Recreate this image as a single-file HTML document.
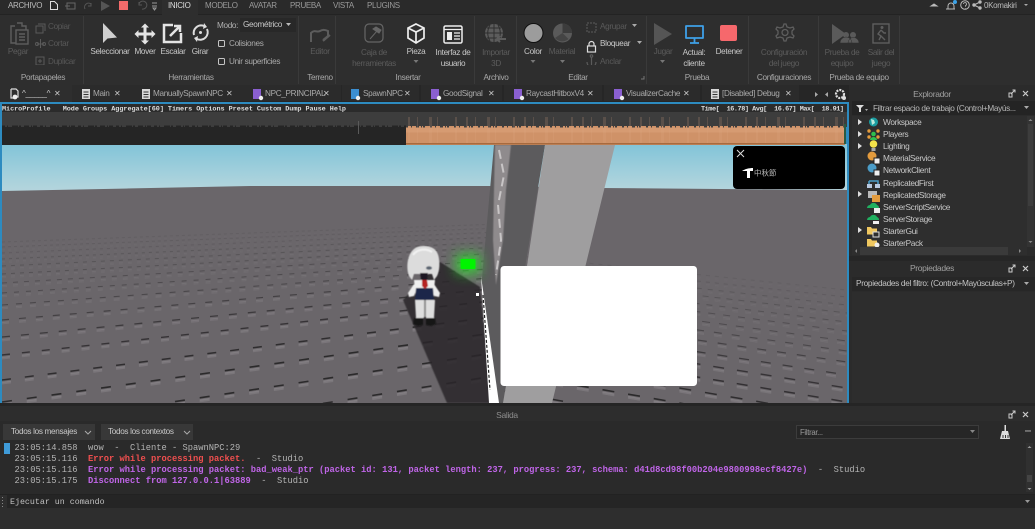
<!DOCTYPE html>
<html><head><meta charset="utf-8"><style>
html,body{margin:0;padding:0;background:#2e2e2e}
#a{position:relative;width:1035px;height:529px;overflow:hidden;background:#2e2e2e;font-family:"Liberation Sans","Noto Sans CJK SC",sans-serif;font-size:8.2px;color:#c8c8c8;filter:blur(.25px)}
#a div,#a span.t,#a svg{position:absolute}
.t{position:absolute;white-space:nowrap;line-height:10px;letter-spacing:-.33px}
.c{transform:translateX(-50%);text-align:center}
.d{color:#5c5c5c}
.g{color:#a9a9a9}
.s{position:absolute;width:1px;background:#3a3a3a;top:16px;height:68px}
.x{position:absolute;color:#c8c8c8;font-size:8px;line-height:10px}
.m{font-family:"Liberation Mono",monospace;font-size:8.75px;line-height:11px;white-space:pre;position:absolute;left:14.5px;color:#b4b4b4}
.m b{font-weight:700}
</style></head><body><div id="a">

<!-- top menu -->
<div style="left:0;top:0;width:1035px;height:14px;background:#2a2a2a"></div>
<div style="left:0;top:14px;width:1035px;height:1px;background:#232323"></div>
<div style="left:162px;top:0;width:36px;height:15px;background:#2e2e2e"></div>
<span class="t" style="left:8px;top:1px;color:#bbb;font-size:8px">ARCHIVO</span>
<span class="t" style="left:168px;top:1px;color:#ddd;font-size:8px">INICIO</span>
<span class="t" style="left:205px;top:1px;color:#9a9a9a;font-size:8px">MODELO</span>
<span class="t" style="left:249px;top:1px;color:#9a9a9a;font-size:8px">AVATAR</span>
<span class="t" style="left:290px;top:1px;color:#9a9a9a;font-size:8px">PRUEBA</span>
<span class="t" style="left:333px;top:1px;color:#9a9a9a;font-size:8px">VISTA</span>
<span class="t" style="left:367px;top:1px;color:#9a9a9a;font-size:8px">PLUGINS</span>
<svg style="left:0;top:0" width="170" height="14" fill="none" stroke-width="1">
<path d="M50.5 1.5h4l3 3v5h-7z" stroke="#ddd"/>
<path d="M67 3h8v6h-8zM65 6h5" stroke="#666"/>
<path d="M85 9a4 4 0 0 1 6-5m0-1v3h-3" stroke="#555"/>
<path d="M101 1l9 5-9 5z" fill="#555" stroke="none"/>
<rect x="119" y="1" width="9" height="9" fill="#f46a6a" stroke="none"/>
<path d="M142 9a4 4 0 1 0-3-5m0-2v3h3" stroke="#555"/>
<path d="M152 3h5M152 6h5M153 8l1.500 2 1.500-2z" stroke="#999"/>
</svg>
<svg style="left:915px;top:0" width="120" height="14" fill="none" stroke="#bbb">
<path d="M16 6l3-2 3 2z" fill="#bbb"/>
<path d="M33 9v-3a3 3 0 0 1 6 0v3h1h-9" />
<circle cx="40" cy="2" r="2" fill="#3ca3e8" stroke="none"/>
<circle cx="50" cy="5" r="4.300"/><path d="M48.500 4a1.500 1.500 0 1 1 2 1.500v1.200M50.500 8v.4" stroke-width=".8"/>
<circle cx="59" cy="5" r="1.200" fill="#bbb"/><circle cx="65" cy="2" r="1.200" fill="#bbb"/><circle cx="65" cy="8" r="1.200" fill="#bbb"/><path d="M59 5l6-3M59 5l6 3"/>
<path d="M109 4l2 2 2-2z" fill="#aaa" stroke="none"/>
</svg>
<span class="t" style="left:984px;top:1px;color:#bbb;font-size:8px">0Komakiri</span>

<!-- ribbon group separators -->
<i class="s" style="left:83px"></i><i class="s" style="left:298px"></i><i class="s" style="left:335px"></i><i class="s" style="left:474px"></i><i class="s" style="left:516px"></i><i class="s" style="left:646px"></i><i class="s" style="left:748px"></i><i class="s" style="left:818px"></i><i class="s" style="left:899px"></i>

<!-- ribbon icons -->
<svg style="left:0;top:15px" width="900" height="50" fill="none">
<!-- pegar -->
<g stroke="#5e5e5e" stroke-width="1.400"><path d="M15 11h-4v17h5M17 8h5v3h4v4"/><rect x="16" y="15" width="12" height="14"/><path d="M19 19h6M19 22h6M19 25h6"/></g>
<!-- copiar etc -->
<g stroke="#5a5a5a"><rect x="36" y="11" width="7" height="7"/><path d="M38 9h7v7"/><circle cx="37" cy="29" r="1.500"/><circle cx="44" cy="29" r="1.500"/><path d="M40.500 24v9M37 29h7"/><rect x="36" y="42" width="8" height="8"/><path d="M38 46h4M40 44v4"/></g>
<!-- select -->
<path d="M103 8v20l4.500-4.500 9.500-1z" fill="#cfcfcf"/>
<!-- move -->
<path d="M145 9l4 4h-2.500v5h5v-2.500l4 4-4 4V21h-5v5h2.500l-4 4-4-4h2.500v-5h-5v2.500l-4-4 4-4V18h5v-5H141z" fill="#e4e4e4" transform="translate(0 -.5)"/>
<!-- scale -->
<path d="M173 10h-9v17h17v-9M170 21l10-10m-6 0h6v6" stroke="#e4e4e4" stroke-width="2.500"/>
<!-- rotate -->
<path d="M194 20a7.500 7.500 0 0 1 10-9M207 14a7.500 7.500 0 0 1-10 10" stroke="#ddd" stroke-width="2"/><path d="M204 8l3 4-4 2zM197 27l-3-4 4-2z" fill="#ddd"/><circle cx="200.500" cy="17.500" r="1.500" fill="#ddd"/>
<!-- terreno -->
<path d="M311 27v-9c4-4 6 0 9-2s6-1 8 0v5l-5 4" stroke="#5c5c5c" stroke-width="2"/><path d="M323 26l7-6" stroke="#5c5c5c" stroke-width="2"/>
<!-- toolbox -->
<rect x="365" y="9" width="18" height="18" rx="4" stroke="#666" stroke-width="1.200"/><path d="M370 24l7-8m-4-2l6 4 2-3-5-3z" fill="#666" stroke="#666"/>
<!-- pieza -->
<path d="M416 9l8 4v10l-8 5-8-5V13zM408 13l8 4 8-4M416 17v11" stroke="#eee" stroke-width="1.700"/>
<!-- UI -->
<rect x="444" y="11" width="18" height="17" rx="1.500" stroke="#eee" stroke-width="1.500"/><rect x="447" y="17" width="5" height="8" fill="#eee"/><path d="M444 14.500h18M454 18h6M454 21h6M454 24h6" stroke="#eee" stroke-width="1.200"/>
<!-- import -->
<circle cx="494" cy="18" r="9" fill="#5c5c5c"/><path d="M485 18h18M494 9v18M487 13h14M487 23h14M490 10c-3 5-3 11 0 16M498 10c3 5 3 11 0 16" stroke="#2e2e2e"/><path d="M506 24h-9m3-3l-3 3 3 3" stroke="#5c5c5c" stroke-width="2"/>
<!-- color/material -->
<circle cx="533.500" cy="18" r="9.500" fill="#9c9c9c" stroke="#111" stroke-width="1"/>
<circle cx="562.500" cy="18" r="9.500" fill="#5a5a5a"/><path d="M562.500 18V8.500a9.500 9.500 0 0 1 9.500 9.500z" fill="#3c3c3c"/><path d="M555 23l7.500-5 6 6a9.500 9.500 0 0 1-13.500-1z" fill="#444"/>
<!-- agrupar lock anchor -->
<rect x="587" y="8" width="9" height="9" stroke="#5c5c5c" stroke-dasharray="2 1"/>
<g stroke="#ddd" stroke-width="1.200"><rect x="587.500" y="31" width="8" height="6"/><path d="M589 31v-2a2.500 2.500 0 0 1 5 0v2"/></g>
<g stroke="#5c5c5c" stroke-width="1.200"><circle cx="591.500" cy="41" r="1.200"/><path d="M591.500 42.500V51M587 47c0 3 2 4.500 4.500 4.500s4.500-1.500 4.500-4.500"/></g>
<!-- play -->
<path d="M654 8v22l18-11z" fill="#555"/>
<!-- actual cliente -->
<path d="M686 11h17v12h-17zM694.500 23v5M690 28h9" stroke="#3ea0e8" stroke-width="1.800" stroke-linejoin="round"/>
<!-- detener -->
<rect x="720" y="10" width="17" height="16" rx="2" fill="#f6686c"/>
<!-- config -->
<path d="M784 9l2 0 1 3 3 1 3-1 1 2-2 2v3l2 2-1 2-3-1-3 1-1 3h-2l-1-3-3-1-3 1-1-2 2-2v-3l-2-2 1-2 3 1 3-1z" stroke="#5e5e5e" stroke-width="1.300"/><circle cx="785" cy="17.500" r="3" stroke="#5e5e5e" stroke-width="1.300"/>
<!-- team test -->
<path d="M832 9l14 10-14 10z" fill="#5a5a5a"/><circle cx="846" cy="20" r="3" fill="#5a5a5a"/><circle cx="853" cy="20" r="3" fill="#5a5a5a"/><path d="M840 28a4 4 0 0 1 12 0zM848 28a4 4 0 0 1 11 0z" fill="#5a5a5a" stroke="#2e2e2e" stroke-width=".5"/>
<!-- exit -->
<rect x="873" y="9" width="16" height="19" stroke="#5e5e5e" stroke-width="1.400"/><circle cx="882" cy="12.500" r="1.500" fill="#5e5e5e"/><path d="M881 15l-3 4 3 2-2 4M881 15l3 3 2 0M881 21l4 4" stroke="#5e5e5e" stroke-width="1.400"/>
</svg>
<svg style="left:218px;top:39px" width="10" height="30" fill="none" stroke="#c5c5c5"><rect x=".5" y="1.500" width="6" height="6" rx="1"/><rect x=".5" y="19.500" width="6" height="6" rx="1"/></svg>

<!-- ribbon labels -->
<span class="t" style="left:48px;top:22px;color:#585858">Copiar</span>
<span class="t" style="left:48px;top:39px;color:#585858">Cortar</span>
<span class="t" style="left:48px;top:57px;color:#585858">Duplicar</span>
<span class="t c d" style="left:18px;top:47px">Pegar</span>
<span class="t c" style="left:110px;top:47px">Seleccionar</span>
<span class="t c" style="left:145px;top:47px">Mover</span>
<span class="t c" style="left:173px;top:47px">Escalar</span>
<span class="t c" style="left:200px;top:47px">Girar</span>
<span class="t" style="left:217px;top:21px;color:#b0b0b0">Modo:</span>
<div style="left:240px;top:18px;width:56px;height:14px;background:#282828"></div>
<span class="t" style="left:243px;top:20px;font-size:8.200px">Geométrico</span>
<svg style="left:286px;top:22px" width="6" height="5"><path d="M0 1h5L2.500 4z" fill="#bbb"/></svg>
<span class="t" style="left:229px;top:39px;color:#aaa">Colisiones</span>
<span class="t" style="left:229px;top:57px;color:#aaa">Unir superficies</span>
<span class="t c d" style="left:320px;top:47px">Editor</span>
<span class="t c d" style="left:374px;top:47px;line-height:11px">Caja de<br>herramientas</span>
<span class="t c" style="left:416px;top:47px">Pieza</span>
<span class="t c" style="left:453px;top:47px;line-height:11px">Interfaz de<br>usuario</span>
<span class="t c d" style="left:496px;top:47px;line-height:11px">Importar<br>3D</span>
<span class="t c" style="left:533px;top:47px">Color</span>
<span class="t c d" style="left:562px;top:47px">Material</span>
<span class="t" style="left:600px;top:22px;color:#5a5a5a">Agrupar</span>
<span class="t" style="left:600px;top:39px;color:#ccc">Bloquear</span>
<span class="t" style="left:600px;top:57px;color:#5a5a5a">Anclar</span>
<span class="t c d" style="left:663px;top:47px">Jugar</span>
<span class="t c" style="left:694px;top:47px;line-height:11px">Actual:<br>cliente</span>
<span class="t c" style="left:729px;top:47px">Detener</span>
<span class="t c d" style="left:784px;top:47px;line-height:11px">Configuración<br>del juego</span>
<span class="t c d" style="left:842px;top:47px;line-height:11px">Prueba de<br>equipo</span>
<span class="t c d" style="left:881px;top:47px;line-height:11px">Salir del<br>juego</span>
<svg style="left:0;top:60px" width="680" height="8"><path d="M413.500 0h5l-2.500 3zM530.500 0h5L533 3zM560 0h5l-2.500 3zM660 0h5l-2.500 3z" fill="#777"/></svg>
<svg style="left:0;top:15px" width="680" height="40"><path d="M632 9h5l-2.500 3zM637 26h5l-2.500 3z" fill="#aaa"/></svg>

<span class="t c g" style="left:43px;top:73px">Portapapeles</span>
<span class="t c g" style="left:191px;top:73px">Herramientas</span>
<span class="t c g" style="left:320px;top:73px">Terreno</span>
<span class="t c g" style="left:408px;top:73px">Insertar</span>
<span class="t c g" style="left:496px;top:73px">Archivo</span>
<span class="t c g" style="left:578px;top:73px">Editar</span>
<span class="t c g" style="left:697px;top:73px">Prueba</span>
<span class="t c g" style="left:784px;top:73px">Configuraciones</span>
<span class="t c g" style="left:859px;top:73px">Prueba de equipo</span>
<svg style="left:640px;top:75px" width="6" height="6"><path d="M1 4h3V1" fill="none" stroke="#777"/></svg>

<!-- tabs bar -->
<div style="left:0;top:85px;width:850px;height:18px;background:#262626"></div>
<div style="left:0;top:85px;width:72px;height:18px;background:#2e2e2e"></div>
<div style="left:72px;top:85px;width:59px;height:16px;background:#2b2b2b"></div>
<div style="left:131px;top:85px;width:111px;height:16px;background:#2b2b2b"></div>
<div style="left:242px;top:85px;width:99px;height:16px;background:#2b2b2b"></div>
<div style="left:342px;top:85px;width:77px;height:16px;background:#2b2b2b"></div>
<div style="left:421px;top:85px;width:81px;height:16px;background:#2b2b2b"></div>
<div style="left:504px;top:85px;width:98px;height:16px;background:#2b2b2b"></div>
<div style="left:604px;top:85px;width:96px;height:16px;background:#2b2b2b"></div>
<div style="left:702px;top:85px;width:97px;height:16px;background:#2b2b2b"></div>
<svg style="left:0;top:85px" width="850" height="18">
<g fill="#d8d8d8"><rect x="82" y="4" width="8" height="10"/><rect x="142" y="4" width="8" height="10"/><rect x="711" y="4" width="8" height="10"/></g>
<g stroke="#333"><path d="M83.500 7h5M83.500 9.500h5M83.500 12h5M143.500 7h5M143.500 9.500h5M143.500 12h5M712.500 7h5M712.500 9.500h5M712.500 12h5"/></g>
<g fill="#8a5fd0"><rect x="253" y="4" width="8" height="10"/><rect x="431" y="4" width="8" height="10"/><rect x="514" y="4" width="8" height="10"/><rect x="614" y="4" width="8" height="10"/></g>
<rect x="351" y="4" width="8" height="10" fill="#3b8ed0"/>
<g fill="#eee"><circle cx="261" cy="13" r="2.200"/><circle cx="439" cy="13" r="2.200"/><circle cx="522" cy="13" r="2.200"/><circle cx="622" cy="13" r="2.200"/><circle cx="358" cy="13" r="2.200"/></g>
<path d="M11 4h5l2 2v6h-1M11 4v9h3" fill="none" stroke="#ddd" stroke-width="1.200"/><circle cx="15" cy="12" r="2.400" fill="#eee"/>
<path d="M815 7l3 2.500-3 2.500z" fill="#aaa"/><path d="M828 7l-3 2.500 3 2.500z" fill="#aaa"/>
<circle cx="840" cy="9" r="4" fill="none" stroke="#ddd" stroke-width="2.200" stroke-dasharray="2 1"/><circle cx="844" cy="13" r="2" fill="#ddd"/>
</svg>
<span class="t" style="left:22px;top:89px">^_____^</span><span class="x" style="left:54px;top:89px">✕</span>
<span class="t" style="left:93px;top:89px;color:#aaa">Main</span><span class="x" style="left:114px;top:89px">✕</span>
<span class="t" style="left:153px;top:89px;color:#aaa">ManuallySpawnNPC</span><span class="x" style="left:226px;top:89px">✕</span>
<span class="t" style="left:265px;top:89px;color:#aaa">NPC_PRINCIPAL</span><span class="x" style="left:323px;top:89px">✕</span>
<span class="t" style="left:363px;top:89px;color:#aaa">SpawnNPC</span><span class="x" style="left:404px;top:89px">✕</span>
<span class="t" style="left:443px;top:89px;color:#aaa">GoodSignal</span><span class="x" style="left:488px;top:89px">✕</span>
<span class="t" style="left:526px;top:89px;color:#aaa">RaycastHitboxV4</span><span class="x" style="left:587px;top:89px">✕</span>
<span class="t" style="left:626px;top:89px;color:#aaa">VisualizerCache</span><span class="x" style="left:683px;top:89px">✕</span>
<span class="t" style="left:722px;top:89px;color:#aaa">[Disabled] Debug</span><span class="x" style="left:785px;top:89px">✕</span>

<!-- viewport -->
<div style="left:0;top:102px;width:849px;height:303px;background:#2d8bc0"></div>
<svg style="left:2px;top:104px" width="845" height="299" viewBox="2 104 845 299">
<defs>
<linearGradient id="sky" x1="0" y1="0" x2="0" y2="1"><stop offset="0" stop-color="#82c4d8"/><stop offset=".6" stop-color="#a3d0dc"/><stop offset="1" stop-color="#b8d6dd"/></linearGradient>
<filter id="gl" x="-200%" y="-200%" width="500%" height="500%"><feGaussianBlur stdDeviation="6"/></filter>
<filter id="b1"><feGaussianBlur stdDeviation=".6"/></filter>
<filter id="b2"><feGaussianBlur stdDeviation=".4"/></filter>
<g id="L" fill="none">
<path d="M2 455L500 375" stroke-width="1.600" stroke-dasharray="10 15" stroke-opacity=".9"/>
<path d="M2 428L500 352" stroke-width="1.600" stroke-dasharray="10 15" stroke-opacity=".9"/>
<path d="M2 402L500 332" stroke-width="1.600" stroke-dasharray="10 15" stroke-opacity=".9"/>
<path d="M2 380L500 316" stroke-width="1.500" stroke-dasharray="9 14" stroke-opacity=".85"/>
<path d="M2 355L500 300" stroke-width="1.400" stroke-dasharray="8 12" stroke-opacity=".75"/>
<path d="M2 337L500 288" stroke-width="1.300" stroke-dasharray="8 11" stroke-opacity=".65"/>
<path d="M2 320L500 277" stroke-width="1.200" stroke-dasharray="7 10" stroke-opacity=".55"/>
<path d="M2 305L500 268" stroke-width="1.100" stroke-dasharray="6 8" stroke-opacity=".45"/>
<path d="M2 293L500 260" stroke-width="1" stroke-dasharray="5 7" stroke-opacity=".4"/>
<path d="M2 283L500 253" stroke-width="1" stroke-dasharray="5 6" stroke-opacity=".35"/>
<path d="M2 274L500 247" stroke-width="1" stroke-dasharray="4 5" stroke-opacity=".3"/>
<path d="M2 266L500 242" stroke-width="1" stroke-dasharray="4 5" stroke-opacity=".25"/>
<path d="M2 259L500 237" stroke-width="1" stroke-dasharray="3 4" stroke-opacity=".2"/>
<path d="M2 253L500 232" stroke-width="1" stroke-dasharray="3 4" stroke-opacity=".15"/>
<path d="M2 247L500 228" stroke-width="1" stroke-dasharray="3 3" stroke-opacity=".12"/>
<path d="M2 242L500 224" stroke-width="1" stroke-dasharray="3 3" stroke-opacity=".1"/>
<path d="M500 390L847 452" stroke-width="1.600" stroke-dasharray="12 14" stroke-opacity=".9"/>
<path d="M500 372L847 432" stroke-width="1.600" stroke-dasharray="12 14" stroke-opacity=".9"/>
<path d="M500 357L847 417" stroke-width="1.500" stroke-dasharray="12 14" stroke-opacity=".85"/>
<path d="M500 344L847 402" stroke-width="1.500" stroke-dasharray="11 13" stroke-opacity=".8"/>
<path d="M500 332L847 388" stroke-width="1.400" stroke-dasharray="11 13" stroke-opacity=".75"/>
<path d="M500 321L847 375" stroke-width="1.300" stroke-dasharray="10 12" stroke-opacity=".65"/>
<path d="M500 311L847 362" stroke-width="1.200" stroke-dasharray="9 11" stroke-opacity=".55"/>
<path d="M500 302L847 351" stroke-width="1.100" stroke-dasharray="8 10" stroke-opacity=".45"/>
<path d="M500 294L847 341" stroke-width="1" stroke-dasharray="8 9" stroke-opacity=".4"/>
<path d="M500 286L847 331" stroke-width="1" stroke-dasharray="7 8" stroke-opacity=".35"/>
<path d="M500 279L847 322" stroke-width="1" stroke-dasharray="6 7" stroke-opacity=".3"/>
<path d="M500 272L847 313" stroke-width="1" stroke-dasharray="6 6" stroke-opacity=".25"/>
<path d="M500 266L847 305" stroke-width="1" stroke-dasharray="5 6" stroke-opacity=".2"/>
<path d="M500 260L847 297" stroke-width="1" stroke-dasharray="4 5" stroke-opacity=".15"/>
<path d="M500 254L847 290" stroke-width="1" stroke-dasharray="4 5" stroke-opacity=".1"/>
</g>
</defs>
<rect x="2" y="144" width="845" height="50" fill="url(#sky)"/>
<path d="M2 191L250 186L500 186L600 188L847 190V403H2z" fill="#6a666a"/>
<!-- stud rows -->
<use href="#L" y="2.500" stroke="#858185"/>
<use href="#L" y="3.800" stroke="#7c787c"/>
<use href="#L" y="0" stroke="#252325"/>
<!-- shadow -->
<path d="M440 262L480 287L491 403L447 403L403 300z" fill="#2a282a" opacity=".86" filter="url(#b1)"/>
<!-- walls -->
<path d="M494 145H545L503 403H490L482 278z" fill="#5c5b5d"/>
<path d="M545 145H615L552 403H503L527 266z" fill="#9f9e9f"/>
<path d="M495 145H511L506 190L503 240L496 285L493 240L494 190z" fill="#8f8b8d" filter="url(#b1)"/>
<path d="M499 150L504 175L498 205L501 240L496 275" stroke="#c8c5c6" stroke-width="2" fill="none" stroke-dasharray="9 5"/>
<!-- white spike -->
<path d="M481 276L499 403L489 403z" fill="#fff"/>
<path d="M483 295L490 390" stroke="#222" stroke-width="1.200" stroke-dasharray="3 2" fill="none"/>
<rect x="476" y="293" width="3" height="3" fill="#fff"/>
<!-- glow -->
<rect x="456" y="254" width="24" height="20" fill="#26e826" filter="url(#gl)" opacity=".75"/>
<rect x="460.500" y="259" width="15" height="10" fill="#00f500" rx="1"/>
<!-- character -->
<g filter="url(#b2)">
<path d="M414 284l-6 9 1 4 5-1 3-7zM434 284l6 9-1 4-5-1-3-7z" fill="#ececec"/>
<path d="M414 280h21l-1 10h-19z" fill="#efefef"/>
<path d="M416 288h17l1 12h-19z" fill="#1e2748"/>
<path d="M415 300h9v18h-8zM426 300h9l-1 18h-8z" fill="#dedede"/>
<path d="M424 300h2v17h-2z" fill="#8d8d8d"/>
<path d="M414 318h9v7l-5 1-5-2zM426 318h9l1 6-5 2-5-1z" fill="#161616"/>
<path d="M423 246c10 0 15 4 16 13c1 7 0 13-2 17l-3 4l-2-6h-18l-2 6l-3-4c-2-5-2-11-1-16c2-9 7-14 15-14z" fill="#dcdcdc"/>
<path d="M413 255c4-6 13-7 19-3" stroke="#f2f2f2" stroke-width="2" fill="none"/>
<path d="M420 273h8l-1 7h-6z" fill="#1c1820"/>
<path d="M422 280h5l1 6-3 3-3-3z" fill="#b52020"/>
<ellipse cx="429" cy="268" rx="3" ry="1.800" fill="#5a6470"/>
</g>
<!-- white box -->
<rect x="500.500" y="266" width="196.500" height="120" rx="3.500" fill="#fff"/>
<!-- black toast -->
<rect x="733" y="146" width="112" height="43" rx="4" fill="#000"/>
<path d="M737 150l7 7M744 150l-7 7" stroke="#ddd" stroke-width="1"/>
<path d="M742 171c3-2 7-3 11-3v3h-3v7h-3v-7h-5z" fill="#fff"/>
<text x="754" y="175.500" fill="#bbb" font-size="7.500" font-family="Liberation Sans,Noto Sans CJK SC,sans-serif">中秋節</text>
<!-- microprofile -->
<rect x="2" y="104" width="845" height="8" fill="#2b2b2b"/>
<rect x="2" y="112" width="845" height="15" fill="#3d3d3d"/>
<rect x="2" y="127" width="404" height="18" fill="#252525"/>
<path d="M2 126.500H406" stroke="#252525" stroke-width="2" stroke-dasharray="3 2 1 4 6 1 2 3 5 2 1 1 4 3"/>
<rect x="358" y="121" width="1" height="13" fill="#5a5a5a"/>
<rect x="406" y="126" width="439" height="19" fill="#cf9268"/>
<path d="M406 126.500H845" stroke="#3d3d3d" stroke-width="2" stroke-dasharray="2 3 1 4 3 2 1 1 2 5"/>
<rect x="406" y="127.500" width="439" height="5" fill="#dba17a" opacity=".6"/>
<rect x="406" y="143" width="439" height="1.500" fill="#a76a3e"/>
<path d="M408 130H845" stroke="#e0a884" stroke-width="26" stroke-dasharray="2 7 1 11 3 5 1 17 2 9" opacity=".18"/>
<rect x="844" y="124" width="2" height="20" fill="#2c5a42"/>
<g font-family="Liberation Mono,DejaVu Sans Mono,monospace" font-size="6.800" fill="#dedede" font-weight="700">
<text x="2" y="110.500" textLength="344" xml:space="preserve">MicroProfile   Mode Groups Aggregate[60] Timers Options Preset Custom Dump Pause Help</text>
<text x="701" y="110.500" textLength="143" xml:space="preserve">Time[  16.78] Avg[  16.67] Max[  18.91]</text>
</g>
</svg>

<!-- explorer -->
<div style="left:849px;top:85px;width:186px;height:320px;background:#2b2b2b"></div>
<span class="t c" style="left:932px;top:89px;color:#a0a0a0;font-size:8.500px">Explorador</span>
<div style="left:852px;top:101px;width:183px;height:14px;background:#242424"></div>
<svg style="left:856px;top:104px" width="14" height="9"><path d="M0 1h8L5 4v4H3V4z" fill="#ddd"/><path d="M9 5h3l-1.500 2z" fill="#aaa"/></svg>
<span class="t" style="left:873px;top:104px;color:#b8b8b8">Filtrar espacio de trabajo (Control+Mayús...</span>
<svg style="left:1024px;top:106px" width="6" height="5"><path d="M0 0h5L2.500 3z" fill="#aaa"/></svg>
<div style="left:852px;top:116px;width:183px;height:131px;background:#2e2e2e"></div>
<svg style="left:852px;top:116px" width="183" height="140" fill="none">
<path d="M6 3l4 3-4 3zM6 15l4 3-4 3zM6 27l4 3-4 3zM6 75l4 3-4 3zM6 111l4 3-4 3z" fill="#ddd"/>
<circle cx="21.500" cy="6" r="4.500" fill="#1a9da0"/><path d="M19 3l3 1 1 3-3 2z" fill="#bdeadc"/>
<g fill="#e39b3d"><circle cx="17" cy="15" r="1.700"/><circle cx="26" cy="15" r="1.700"/><circle cx="17" cy="21" r="1.700"/><circle cx="26" cy="21" r="1.700"/></g><circle cx="21.500" cy="18" r="2.300" fill="#2dbf4e"/><path d="M18 24a3.500 3 0 0 1 7 0z" fill="#2dbf4e"/>
<circle cx="21.500" cy="28" r="3.800" fill="#f4e24a"/><rect x="19.500" y="32" width="4" height="3" fill="#aaa"/>
<circle cx="20" cy="40" r="4.500" fill="#e39b3d"/><rect x="22" y="42" width="6" height="6" fill="#eee" stroke="#222"/>
<circle cx="20" cy="52" r="4.500" fill="#4b9dc8"/><rect x="22" y="54" width="6" height="6" fill="#eee" stroke="#222"/>
<path d="M17 65h9v3M17 65v3" stroke="#4b9dc8" stroke-width="1.500"/><rect x="15" y="68" width="5" height="4" fill="#b8c8e0"/><rect x="23" y="68" width="5" height="4" fill="#b8c8e0"/>
<rect x="16" y="75" width="9" height="7" fill="#b8b8b8"/><rect x="20" y="79" width="8" height="7" fill="#e39b3d"/>
<path d="M15 92a3 3 0 0 1 3-3a4 4 0 0 1 7 0a3 3 0 0 1 2 3z" fill="#20b060"/><rect x="22" y="92" width="6" height="5" fill="#eee"/>
<path d="M15 104a3 3 0 0 1 3-3a4 4 0 0 1 7 0a3 3 0 0 1 2 3z" fill="#20b060"/><rect x="21" y="105" width="6" height="3" fill="#eee"/>
<path d="M15 111h4l1 1.500h5v6H15z" fill="#f0c860"/><rect x="21" y="116" width="6" height="5" fill="#2e2e2e" stroke="#ddd"/>
<path d="M15 123h4l1 1.500h5v6H15z" fill="#f0c860"/><circle cx="25" cy="129" r="2.500" fill="#eee"/>
<rect x="175" y="0" width="7" height="131" fill="#333"/><rect x="176" y="8" width="5" height="82" fill="#3d3d3d"/>
<path d="M176.500 5l2-2 2 2zM176.500 125l2 2 2-2z" fill="#888"/>
<rect x="0" y="131" width="175" height="8" fill="#2e2e2e"/><rect x="8" y="131" width="148" height="8" fill="#3a3a3a"/>
<path d="M5 133v4l-2-2zM167 133v4l2-2z" fill="#888"/>
</svg>
<span class="t" style="left:883px;top:117px;font-size:8.300px">Workspace</span>
<span class="t" style="left:883px;top:129px;font-size:8.300px">Players</span>
<span class="t" style="left:883px;top:141px;font-size:8.300px">Lighting</span>
<span class="t" style="left:883px;top:153px;font-size:8.300px">MaterialService</span>
<span class="t" style="left:883px;top:165px;font-size:8.300px">NetworkClient</span>
<span class="t" style="left:883px;top:178px;font-size:8.300px">ReplicatedFirst</span>
<span class="t" style="left:883px;top:190px;font-size:8.300px">ReplicatedStorage</span>
<span class="t" style="left:883px;top:202px;font-size:8.300px">ServerScriptService</span>
<span class="t" style="left:883px;top:214px;font-size:8.300px">ServerStorage</span>
<span class="t" style="left:883px;top:226px;font-size:8.300px">StarterGui</span>
<span class="t" style="left:883px;top:238px;font-size:8.300px">StarterPack</span>
<div style="left:849px;top:256px;width:186px;height:5px;background:#262626"></div>
<span class="t c" style="left:932px;top:263px;color:#a0a0a0;font-size:8.500px">Propiedades</span>
<div style="left:852px;top:277px;width:183px;height:14px;background:#272727"></div>
<span class="t" style="left:856px;top:278px;color:#c4c4c4;font-size:8.300px">Propiedades del filtro: (Control+Mayúsculas+P)</span>
<svg style="left:1024px;top:282px" width="6" height="5"><path d="M0 0h5L2.500 3z" fill="#aaa"/></svg>
<div style="left:852px;top:292px;width:183px;height:111px;background:#2d2d2d"></div>
<!-- float/close icons -->
<svg style="left:1008px;top:89px" width="27" height="10" fill="none" stroke="#ccc"><path d="M1 4h3v4H1zM3 5l4-4M4.500 1H7v2.500"/><path d="M15 2l5 5M20 2l-5 5" stroke-width="1.200"/></svg>
<svg style="left:1008px;top:264px" width="27" height="10" fill="none" stroke="#ccc"><path d="M1 4h3v4H1zM3 5l4-4M4.500 1H7v2.500"/><path d="M15 2l5 5M20 2l-5 5" stroke-width="1.200"/></svg>

<!-- output -->
<div style="left:0;top:405px;width:1035px;height:16px;background:#2d2d2d"></div>
<div style="left:0;top:403px;width:1035px;height:3px;background:#252525"></div>
<span class="t c" style="left:507px;top:410px;color:#8e8e8e;font-size:8.500px">Salida</span>
<svg style="left:1008px;top:410px" width="27" height="10" fill="none" stroke="#ccc"><path d="M1 4h3v4H1zM3 5l4-4M4.500 1H7v2.500"/><path d="M15 2l5 5M20 2l-5 5" stroke-width="1.200"/></svg>
<div style="left:0;top:421px;width:1035px;height:21px;background:#2a2a2a"></div>
<div style="left:3px;top:424px;width:92px;height:16px;background:#383838"></div>
<div style="left:101px;top:424px;width:92px;height:16px;background:#383838"></div>
<span class="t" style="left:11px;top:427px;font-size:8.200px">Todos los mensajes</span>
<span class="t" style="left:108px;top:427px;font-size:8.200px">Todos los contextos</span>
<svg style="left:0;top:424px" width="200" height="16" fill="none" stroke="#aaa"><path d="M85 7l3 3 3-3M184 7l3 3 3-3"/></svg>
<div style="left:796px;top:425px;width:183px;height:14px;background:#262626;box-sizing:border-box;border:1px solid #3c3c3c"></div>
<span class="t" style="left:800px;top:428px;color:#999;font-size:7.800px">Filtrar...</span>
<svg style="left:970px;top:430px" width="6" height="5"><path d="M0 0h5L2.500 3z" fill="#888"/></svg>
<svg style="left:998px;top:424px" width="36" height="16"><rect x="6.500" y="1" width="1.500" height="6" fill="#ddd"/><path d="M4 7h6l2 8H2z" fill="#ddd"/><path d="M5 11v3M7.500 11v3M10 11v3" stroke="#333"/><circle cx="28" cy="7" r=".7" fill="#ccc"/><circle cx="30" cy="7" r=".7" fill="#ccc"/><circle cx="32" cy="7" r=".7" fill="#ccc"/></svg>
<div style="left:0;top:442px;width:1035px;height:52px;background:#2a2a2a"></div>
<div style="left:4px;top:443px;width:6px;height:11px;background:#3f9bd8"></div>
<div class="m" style="top:443px">23:05:14.858  wow  -  Cliente - SpawnNPC:29</div>
<div class="m" style="top:454px">23:05:15.116  <b style="color:#f04f4f">Error while processing packet.</b>  -  Studio</div>
<div class="m" style="top:465px">23:05:15.116  <b style="color:#c065e8">Error while processing packet: bad_weak_ptr (packet id: 131, packet length: 237, progress: 237, schema: d41d8cd98f00b204e9800998ecf8427e)</b>  -  Studio</div>
<div class="m" style="top:476px">23:05:15.175  <b style="color:#c065e8">Disconnect from 127.0.0.1|63889</b>  -  Studio</div>
<svg style="left:1024px;top:443px" width="11" height="50"><rect x="2" y="0" width="7" height="49" fill="#303030"/><rect x="3" y="32" width="5" height="7" fill="#444"/><path d="M3.500 5l2-2 2 2zM3.500 45l2 2 2-2z" fill="#999"/></svg>
<div style="left:0;top:494px;width:1035px;height:1px;background:#222"></div>
<div style="left:7px;top:495px;width:1028px;height:13px;background:#252525"></div>
<div class="m" style="top:497px;left:10px;color:#c0c0c0;font-size:8.300px">Ejecutar un comando</div>
<svg style="left:1025px;top:500px" width="6" height="5"><path d="M0 0h5L2.500 3z" fill="#999"/></svg>
<svg style="left:0;top:496px" width="6" height="12"><path d="M2.500 1v1M2.500 4v1M2.500 7v1M2.500 10v1" stroke="#888"/></svg>
<div style="left:0;top:508px;width:1035px;height:21px;background:#2e2e2e"></div>
</div></body></html>
